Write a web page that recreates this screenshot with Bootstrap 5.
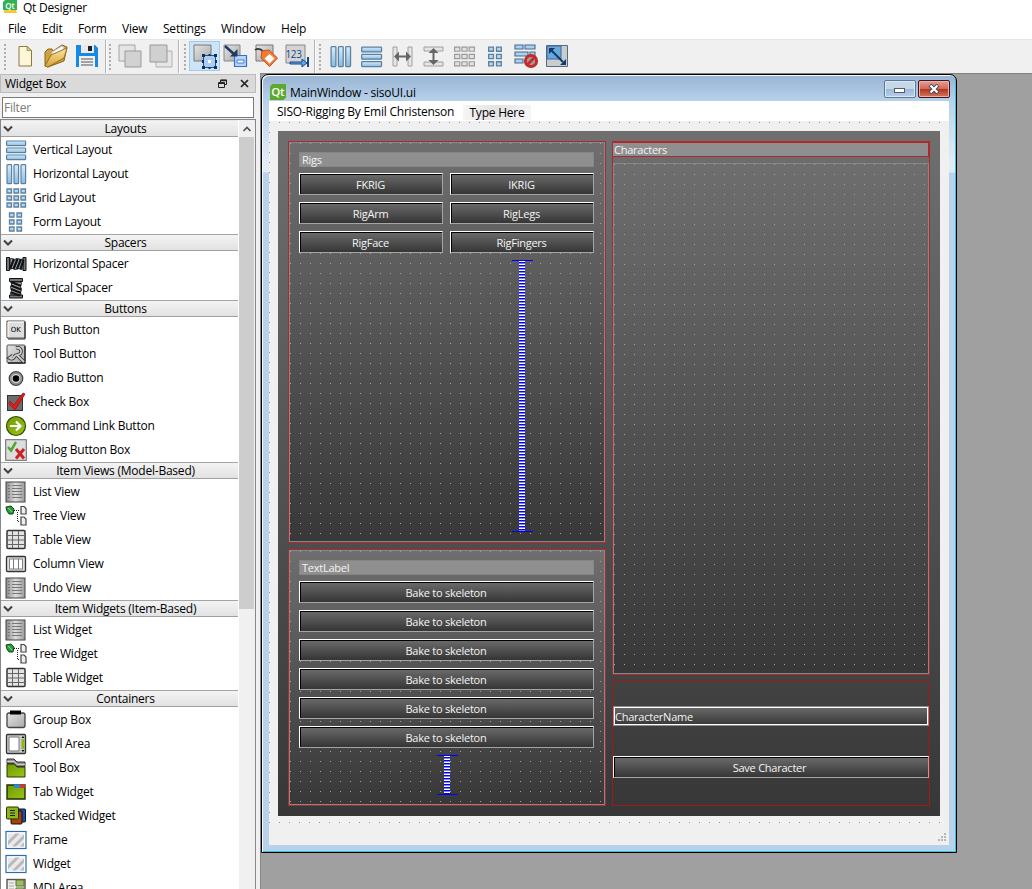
<!DOCTYPE html>
<html lang="en">
<head>
<meta charset="utf-8">
<title>Qt Designer</title>
<link href="https://cdn.jsdelivr.net/npm/bootstrap@5.3.0/dist/css/bootstrap.min.css" rel="stylesheet">
<style>
html,body{height:100%}
body{font:12px/16px "Open Sans","Noto Sans",sans-serif;letter-spacing:-.22px;color:#000;background:#fff;width:1032px;height:889px;overflow:hidden;white-space:nowrap}
svg{display:block;flex:none}
.titlebar{height:17px;padding-left:3px}
.titlebar span{margin-left:5px;line-height:15px}
.menus{height:22px;padding-left:8px}
.menus span{line-height:24px}
.tools{height:34px;background:#f0f0f0;border-top:1px solid #e6e6e6}
.tbar{height:33px;border-right:1px solid #b5b5b5;box-shadow:1px 0 #fcfcfc}
.grip{width:2px;height:26px;background:repeating-linear-gradient(#adadad 0 2px,transparent 2px 4px)}
.tool{width:31px;height:32px;padding-right:1px;display:flex;align-items:center;justify-content:center}
.tool.on{background:#cce4f7;border:1px solid #9fcbee;height:30px;width:31px;padding:0;margin-top:1px}
.workspace{height:816px;background:#f0f0f0}
.dock{width:256px;height:816px}
.dockhead{height:19px;margin-top:1px;background:#dadada;border:1px solid #bcbcbc;padding:0 6px 0 4px}
.filter{height:21px;width:252px;margin:4px 0 1px 2px;background:#fff;border:1px solid #7a7a7a;padding-left:1px;color:#7b7b7b;line-height:20px}
.tree{width:256px;height:770px;border:1px solid #828790;border-bottom:0;background:#fff;overflow:hidden}
.cat{width:237px;height:17px;margin-bottom:1px;background:linear-gradient(#f3f3f3,#e2e2e2);border-top:1px solid #a5a5a5;border-bottom:1px solid #a0a0a0;line-height:16px;padding:0 0 0 2px}
.cat:first-child{border-top-color:#e8e8e8}
.entry{height:24px;padding-left:4px;line-height:16px}
.entry svg{width:22px;height:22px;margin-right:6px;margin-top:-1px}
.vbar{width:16px;background:#f0f0f0}
.vbar .up{height:17px}
.vbar .thumb{height:472px;width:15px;background:#cdcdcd}
.mdi{margin-left:4px;width:772px;background:#a0a0a0;border-left:1px solid #828790;border-top:1px solid #828282}
.subwin{width:696px;height:779px;border:1px solid #000;border-radius:7px 7px 0 0;background:linear-gradient(#99b4d1 0,#a9c4e0 14px,#b9d1ea 26px,#e2ebf6 85px,#e2ebf6 97px,#b9d1ea 98px);box-shadow:inset 1px 1px #f4fafe,inset -1px -1px #35c4de;padding:0 7px 7px 7px}
.subtitle{height:26px;padding-top:5px}
.wbtn{width:32px;height:18px;border-radius:2px;border:1px solid #5d7797;background:linear-gradient(#c6d7ea 48%,#9db9d7 52%,#b8d0ea);box-shadow:inset 0 0 0 1px #dbe8f5;display:flex;align-items:center;justify-content:center}
.wbtn.close-it{border-color:#43141f;background:linear-gradient(#e0a095,#d5695a 48%,#b73321 52%,#d07a5c);box-shadow:inset 0 0 0 1px #e9b3a6}
.submenu{height:20px;background:#fff;padding-left:8px;line-height:22px}
.typehere{width:68px;background:linear-gradient(90deg,#f5f5f5,#e3e3e3 50%,#f5f5f5);height:15px;line-height:15px;margin:4px 0 0 8px;text-align:center}
.canvas{height:724px;padding:10px 9px 0 9px;background:url("data:image/svg+xml,%3Csvg xmlns='http://www.w3.org/2000/svg' width='10' height='10'%3E%3Crect width='1' height='1' fill='%23909090'/%3E%3C/svg%3E") 0 1px/10px 10px,#f0f0f0}
.form-area{height:692px}
.mainframe{width:662px;height:685px;background:linear-gradient(#6f6f6f,#373737);padding:10px;font-size:11px;letter-spacing:-.24px;color:#f4f4f4;line-height:14px}
.redbox{border:1px solid #b0282a}
.inner{border:1px solid #85888c;height:100%}
.grad{background:url("data:image/svg+xml,%3Csvg xmlns='http://www.w3.org/2000/svg' width='10' height='10'%3E%3Crect width='1' height='1' fill='%23a4a4a4'/%3E%3C/svg%3E") 0 0/10px 10px,linear-gradient(#6e6e6e,#383838)}
.cap{height:15px;background:#8f8f8f;border:1px solid #868686;padding-left:2px;line-height:14px}
.pbtn{height:22px;border:1px solid #fff;border-right-color:#a5a5a5;border-bottom-color:#a5a5a5;background:linear-gradient(#6c6c6c,#353535);box-shadow:inset 1px 1px #000;text-align:center;line-height:21px;padding-right:1px}
.half{width:144px}
.coil{width:21px;border-top:1px solid #00f;border-bottom:1px solid #00f}
.coil div{width:6px;height:100%;margin-left:7px;background:repeating-linear-gradient(#fff 0 1px,#00f 1px 2px,#8080ff 2px 3px)}
.lite{border:1px solid #8c8c8c;height:20px;width:316px}
.lite div{border:1px solid #fff;height:18px;background:linear-gradient(#676767,#3a3a3a);line-height:18px}
.charcap{height:15px;background:#8f8f8f;line-height:13px;border-left:0;padding-left:1px}
.statusrow{height:21px;background:#f0f0f0;margin:0 -9px}
</style>
</head>
<body>
<svg width="0" height="0" class="position-absolute">
<defs>
<linearGradient id="bl" x2="0" y2="1"><stop stop-color="#d4efff"/><stop offset="1" stop-color="#86bbe2"/></linearGradient>
<linearGradient id="gy" x2="1" y2="1"><stop stop-color="#e4e4e4"/><stop offset="1" stop-color="#a9a9a9"/></linearGradient>
<linearGradient id="dk" x2="1"><stop stop-color="#8a8a8a"/><stop offset=".5" stop-color="#ddd"/><stop offset="1" stop-color="#999"/></linearGradient>
<linearGradient id="gn" x2="1" y2="1"><stop stop-color="#6d9a00"/><stop offset="1" stop-color="#9cc41c"/></linearGradient>
<linearGradient id="fo" x2="0" y2="1"><stop stop-color="#fbe6a4"/><stop offset="1" stop-color="#d9a233"/></linearGradient>
</defs>
<symbol id="chev" viewBox="0 0 10 8"><path d="M1 1.500l4 4 4-4" fill="none" stroke="#404040" stroke-width="2"/></symbol>
<symbol id="vl" viewBox="0 0 22 22"><g fill="url(#bl)" stroke="#5f7f9f" stroke-width="1.2"><rect x="1.6" y="2" width="19" height="4.6" rx=".7"/><rect x="1.6" y="9" width="19" height="4.6" rx=".7"/><rect x="1.6" y="16" width="19" height="4.6" rx=".7"/></g></symbol>
<symbol id="hl" viewBox="0 0 22 22"><g fill="url(#bl)" stroke="#5f7f9f" stroke-width="1.2"><rect x="2" y="1.6" width="4.6" height="19" rx=".7"/><rect x="9" y="1.6" width="4.6" height="19" rx=".7"/><rect x="16" y="1.6" width="4.6" height="19" rx=".7"/></g></symbol>
<symbol id="gl" viewBox="0 0 22 22"><path fill="#b4dbf5" stroke="#5f7f9f" stroke-width="1.3" d="M2 2h4.500v4H2zM9 2h4.500v4H9zM16 2h4.500v4H16zM2 9h4.500v4H2zM9 9h4.500v4H9zM16 9h4.500v4H16zM2 16h4.500v4H2zM9 16h4.500v4H9zM16 16h4.500v4H16z"/></symbol>
<symbol id="gg" viewBox="0 0 22 22"><path fill="#e2e2e2" stroke="#9a9a9a" stroke-width="1.1" d="M1.500 2h5v4h-5zM8.500 2h5v4h-5zM15.500 2h5v4h-5zM1.500 9h5v4h-5zM8.500 9h5v4h-5zM15.500 9h5v4h-5zM1.500 16h5v4h-5zM8.500 16h5v4h-5zM15.500 16h5v4h-5z"/></symbol>
<symbol id="fl" viewBox="0 0 22 22"><path fill="#b4dbf5" stroke="#5f7f9f" stroke-width="1.3" d="M4.500 2H9v4H4.500zM12 2h4.500v4H12zM4.500 9H9v4H4.500zM12 9h4.500v4H12zM4.500 16H9v4H4.500zM12 16h4.500v4H12z"/></symbol>
<symbol id="hs" viewBox="0 0 22 22"><path d="M1.500 4.500h3v13h-3zM18 4.500h3v13h-3z" fill="#777" stroke="#111"/><path d="M5 6q2-1 3 0t3 0 3 0 4 0v10q-2 1-3 0t-3 0-3 0-4 0z" fill="#8fa3af" stroke="#222"/><path d="M5 16l4-10M8.500 16l4-10M12 16l4-10M15.500 16l3-9" stroke="#111" stroke-width="2.200"/></symbol>
<symbol id="vs" viewBox="0 0 22 22"><use href="#hs" width="22" height="22" transform="rotate(90 11 11)"/></symbol>
<symbol id="pb" viewBox="0 0 22 22"><rect x="2" y="2" width="18" height="17" rx="1" fill="#ddd" stroke="#555" stroke-width="1.200"/><path d="M20 3v17H3" fill="none" stroke="#222"/><path d="M3 18V3h16" fill="none" stroke="#fff"/><text x="10.800" y="12.500" font-size="7" text-anchor="middle" letter-spacing="0" font-family="DejaVu Sans">OK</text></symbol>
<symbol id="tb" viewBox="0 0 22 22"><rect x="2" y="2" width="18" height="18" rx="1" fill="url(#gy)" stroke="#555"/><path d="M20 3v17H3" fill="none" stroke="#222" stroke-width="1.300"/><path d="M11 5q4-1 5 2.500T12 12q-1.500 0-2.500 1.500-2 3.500-5 1.500l3.500-2.500M12 12l7 7" fill="none" stroke="#333" stroke-width="3.600"/><path d="M11 5q4-1 5 2.500T12 12q-1.500 0-2.500 1.500-2 3.500-5 1.500l3.500-2.500M12 12l7 7" fill="none" stroke="#ccc" stroke-width="1.800"/></symbol>
<symbol id="rb" viewBox="0 0 22 22"><circle cx="11" cy="11.500" r="6.800" fill="#999" stroke="#444" stroke-width="1.200"/><circle cx="11" cy="11.500" r="5" fill="#dcdcdc" stroke="#888"/><circle cx="11" cy="11.500" r="3.300" fill="#000"/></symbol>
<symbol id="cb" viewBox="0 0 22 22"><rect x="2.500" y="4.500" width="15" height="15" fill="#6c6c6c" stroke="#333"/><path d="M5 10l4 4 9-12 2 1L10 19 4 13z" fill="#d81e1e" stroke="#a01010" stroke-width=".8"/></symbol>
<symbol id="cl" viewBox="0 0 22 22"><circle cx="11" cy="11" r="9.500" fill="url(#gn)" stroke="#374c06" stroke-width="1.200"/><path d="M5 11h10M11 6.500l4.500 4.500-4.500 4.500" fill="none" stroke="#fff" stroke-width="2.200"/></symbol>
<symbol id="db" viewBox="0 0 22 22"><rect x=".7" y=".7" width="20.600" height="20.600" fill="#ddd" stroke="#666"/><path d="M3 8l3 3.500L11 3" fill="none" stroke="#4caa31" stroke-width="2.500"/><path d="M11 10l8 9.500M19 10l-8 9.500" stroke="#c22" stroke-width="3"/></symbol>
<symbol id="lv" viewBox="0 0 22 22"><rect x="1" y="1" width="19" height="20" fill="url(#dk)" stroke="#444"/><path d="M3 4.500h2M3 7.500h2M3 10.500h2M3 13.500h2M3 16.500h2M7 4.500h10M7 7.500h10M7 10.500h10M7 13.500h10M7 16.500h10" stroke="#777" stroke-width="1"/></symbol>
<symbol id="tv" viewBox="0 0 22 22"><path d="M1 2l5-1 3 3-1 5H4Q1 6 1 2z" fill="#2d9a3e" stroke="#114a18"/><path d="M3 3l4 4" stroke="#90e090"/><path d="M9 5.500h6M12.500 7v9.500H15" fill="none" stroke="#222" stroke-dasharray="1 1"/><path d="M16 1.500h3l2 2V9h-5zM16 12h3l2 2v6h-5z" fill="#eee" stroke="#444" stroke-width="1.200"/></symbol>
<symbol id="ta" viewBox="0 0 22 22"><rect x="2" y="1.500" width="18" height="18" rx="1" fill="#e4e4e4" stroke="#333" stroke-width="1.500"/><path d="M3 6.500h17M3 11h17M3 15.500h17M7.500 2v17M13.500 2v17" stroke="#666"/></symbol>
<symbol id="cv" viewBox="0 0 22 22"><rect x="1.500" y="3.500" width="19" height="15" rx="1" fill="#ddd" stroke="#333" stroke-width="1.300"/><path d="M4.500 6h4v10h-4zM8.500 6h5v10h-5zM13.500 6h4v10h-4z" fill="#fff" stroke="#777" stroke-width=".9"/></symbol>
<symbol id="gb" viewBox="0 0 22 22"><rect x="2" y="4" width="18" height="14.500" rx="2" fill="url(#gy)" stroke="#444" stroke-width="1.300"/><path d="M5 1.500h11v4H5z" fill="#000"/></symbol>
<symbol id="sa" viewBox="0 0 22 22"><rect x="1.500" y="1.500" width="19" height="19" rx="1" fill="#ccc" stroke="#333" stroke-width="1.300"/><path d="M4 4h10v14H4z" fill="#fff" stroke="#777"/><path d="M16.500 6h3v10h-3z" fill="#8fb51d"/><path d="M16.500 5L18 3l1.500 2zM16.500 17l1.500 2 1.500-2z"/></symbol>
<symbol id="to" viewBox="0 0 22 22"><path d="M2 7h7l3 3h8v10H2z" fill="url(#gn)" stroke="#263a00"/><path d="M2 2h7l3 3h8v4.500h-8L9 6.500H2z" fill="#888" stroke="#333"/><path d="M2 4.300h7l3 3h8" fill="none" stroke="#ddd"/></symbol>
<symbol id="tw" viewBox="0 0 22 22"><path d="M2 5V4h18v14H2z" fill="url(#gn)" stroke="#1f2e00" stroke-width="1.400"/><path d="M9 3.500h6V7H9z" fill="#258bd8"/><path d="M15 3.500h5V7h-5z" fill="#d93425"/></symbol>
<symbol id="sw" viewBox="0 0 22 22"><rect x="11" y="4" width="9.500" height="13" rx="1" fill="#1653ae" stroke="#111"/><rect x="6" y="6" width="11" height="13" rx="1" fill="#a8410d" stroke="#111"/><rect x="1.500" y="2" width="12" height="12" rx="1" fill="#8eb61b" stroke="#263300"/><path d="M5 5.500h5M5 8h5M5 10.500h5" stroke="#222"/></symbol>
<symbol id="fr" viewBox="0 0 22 22"><rect x="1" y="2.500" width="20" height="17" fill="#fff" stroke="#2c6db4" stroke-width="1.200"/><rect x="3" y="4.500" width="16" height="13" fill="#e9e9e9"/><path d="M3 12l7.500-7.500h4L3 16zM7 17.500l12-12v4l-8 8zM15 17.500l4-4v4z" fill="#b9b9b9"/></symbol>
<symbol id="md" viewBox="0 0 22 22"><rect x="2" y="2.500" width="18" height="17" fill="#eee" stroke="#555" stroke-width="1.400"/><path d="M11 3h8v6h-8z" fill="#9cbf60" stroke="#587530"/><path d="M4 6h5M4 9h5M4 12h5" stroke="#aaa"/><path d="M11 11h8v7h-8z" fill="#bcd2a0" stroke="#587530"/></symbol>
<symbol id="qt" viewBox="0 0 16 16"><path d="M2.500 0H16v13.500L13.500 16H0V2.500z" fill="#5caa2d"/><text x="7.800" y="12" font-size="11.500" font-weight="600" fill="#fff" text-anchor="middle" letter-spacing="-.3">Qt</text></symbol>
</svg>

<header class="titlebar d-flex">
<svg width="15" height="15" viewBox="0 0 15 15"><path d="M2 0h12v10H0V2z" fill="#2fb355"/><path d="M1 10h12l1 3H1z" fill="#f2c833"/><text x="7" y="8.700" font-size="8" font-weight="600" fill="#fff" text-anchor="middle" letter-spacing="0">Qt</text></svg>
<span>Qt Designer</span></header>
<nav class="menus d-flex"><span style="width:34px">File</span><span style="width:36px">Edit</span><span style="width:44px">Form</span><span style="width:41px">View</span><span style="width:58px">Settings</span><span style="width:60px">Window</span><span>Help</span></nav>

<div class="tools d-flex">
<div class="tbar d-flex" style="width:106px;padding:0 0 0 4px"><i class="grip mt-1"></i>
<div class="d-flex ms-1">
<div class="tool"><svg width="16" height="24" viewBox="0 0 16 24"><path d="M2 2.500h8l4.500 4V22H2z" fill="#fdf6d8" stroke="#8a7a3c"/><path d="M10 2.500v4h4.500z" fill="#e4cf86" stroke="#8a7a3c" stroke-width=".7"/></svg></div>
<div class="tool"><svg width="26" height="26" viewBox="0 0 26 26"><path d="M2 23V9l3-3h4l1 2 9-6 5 2-3 14-16 6z" fill="#d0a13e" stroke="#8a661d"/><path d="M9 9l10-6 2 1-1 8-12 5z" fill="#fff" stroke="#bbb"/><path d="M2 23l6-11 16-7L21 15 5 24z" fill="url(#fo)" stroke="#94701f"/></svg></div>
<div class="tool"><svg width="24" height="24" viewBox="0 0 24 24"><path d="M1 1h19l3 3v19H1z" fill="#1788e6"/><path d="M6 1h13v8H6z" fill="#e9e9e9"/><path d="M13 2h4v5h-4z" fill="#222"/><path d="M4 12h16v11H4z" fill="#f1f1f1"/><path d="M6 15h12M6 18h12M6 21h12" stroke="#888" stroke-width="1.500"/></svg></div>
</div></div>
<div class="tbar d-flex" style="width:73px;padding-left:3px"><i class="grip mt-1"></i><div class="d-flex ms-1">
<div class="tool"><svg width="26" height="26" viewBox="0 0 26 26"><path d="M2 2h16v16H2z" fill="#e4e4e4" stroke="#a4a4a4"/><path d="M8 8h16v16H8z" fill="#d2d2d2" stroke="#999"/></svg></div>
<div class="tool"><svg width="26" height="26" viewBox="0 0 26 26"><path d="M8 8h16v16H8z" fill="#e6e6e6" stroke="#b0b0b0"/><path d="M2 2h17v17H2z" fill="#d0d0d0" stroke="#999"/></svg></div>
</div></div>
<div class="tbar d-flex" style="width:136px;padding-left:5px"><i class="grip mt-1"></i><div class="d-flex" style="margin-left:3px">
<div class="tool on"><svg width="26" height="26" viewBox="0 0 26 26"><path d="M2 2h17v16H2z" fill="url(#gy)" stroke="#777"/><path d="M11.500 12.500h12v12h-12z" fill="#a9cdf5" stroke="#264f86"/><path d="M10 11h3v3h-3zM16.500 11h2v2h-2zM22 11h3v3h-3zM10 17h2v3h-2zM23 17h2v3h-2zM10 23h3v3h-3zM16.500 24h2v2h-2zM22 23h3v3h-3z" fill="#12305c"/><path d="M16 17h3v3h-3z" fill="#fff"/></svg></div>
<div class="tool"><svg width="26" height="26" viewBox="0 0 26 26"><path d="M2 2h16v16H2z" fill="url(#gy)" stroke="#888"/><path d="M12.500 12.500h12v11h-12z" fill="#b5d4fb" stroke="#3772c5" stroke-width="1.200"/><path d="M15 17h7v3h-7z" fill="#fff" stroke="#3f7ed1"/><path d="M3 3l10 9" stroke="#223b60" stroke-width="2.500"/><path d="M15.500 6v7.500H8z" fill="#223b60"/></svg></div>
<div class="tool"><svg width="26" height="26" viewBox="0 0 26 26"><path d="M3 2h17v16H3z" fill="url(#gy)" stroke="#777"/><path d="M2 7q4-3 9 2" fill="none" stroke="#333" stroke-width="1.500"/><path d="M9 8l7-1 8.500 8-8 8.500L8 15z" fill="#f47b35" stroke="#c4500f"/><path d="M16.500 11l5 4.500-5 5-5-5z" fill="#fff"/></svg></div>
<div class="tool"><svg width="26" height="26" viewBox="0 0 26 26"><path d="M2 2h19v18H2z" fill="#d4d4d4" stroke="#888"/><text x="9.500" y="15" font-size="10" text-anchor="middle" fill="#174587" letter-spacing="-.4">123</text><path d="M6 19h12v-3l5 4-5 4v-3H6z" fill="#65a6e8" stroke="#174587"/><path d="M24 14v10" stroke="#174587" stroke-width="2"/></svg></div>
</div></div>
<div class="d-flex" style="padding-left:4px"><i class="grip mt-1"></i><div class="d-flex" style="margin-left:4px">
<div class="tool"><svg width="23" height="23"><use href="#hl"/></svg></div>
<div class="tool"><svg width="23" height="23"><use href="#vl"/></svg></div>
<div class="tool"><svg width="23" height="23" viewBox="0 0 23 23"><path d="M2 2h4v19H2zM17 2h4v19h-4z" fill="#e5e5e5" stroke="#a0a0a0"/><path d="M3 11.500l5-5v4h7v-4l5 5-5 5v-4H8v4z" fill="#666"/></svg></div>
<div class="tool"><svg width="23" height="23" viewBox="0 0 23 23"><path d="M2 2h19v4H2zM2 17h19v4H2z" fill="#e5e5e5" stroke="#a0a0a0"/><path d="M11.500 3l5 5h-4v7h4l-5 5-5-5h4V8h-4z" fill="#666"/></svg></div>
<div class="tool"><svg width="23" height="23"><use href="#gg"/></svg></div>
<div class="tool"><svg width="23" height="23"><use href="#fl"/></svg></div>
<div class="tool"><svg width="26" height="26" viewBox="0 0 26 26"><path d="M2 2h8v4H2zM12 2h10v4H12zM2 9h13v4H2zM17 9h5v4h-5zM2 16h8v4H2z" fill="#a8d3f0" stroke="#49698b" stroke-width="1.100"/><circle cx="18" cy="18" r="5.600" fill="#a59a9a" stroke="#c22b2b" stroke-width="3"/><path d="M14 22l8-8" stroke="#c22b2b" stroke-width="2.500"/></svg></div>
<div class="tool"><svg width="24" height="24" viewBox="0 0 24 24"><path d="M1.500 1.500h21v21h-21z" fill="#c9cdd1" stroke="#5b6a7a"/><path d="M2 2h14v13H2z" fill="#69a8dc" stroke="#40699a"/><path d="M6 6l12 12" stroke="#123a63" stroke-width="2"/><path d="M4 4h6l-6 6zM21 21v-6l-6 6z" fill="#123a63"/></svg></div>
</div></div>
</div>

<main class="workspace d-flex">
<aside class="dock">
<div class="dockhead d-flex align-items-center justify-content-between"><span style="line-height:18px;padding-top:1px">Widget Box</span>
<span class="d-flex gap-3 align-items-center"><svg width="9" height="9" viewBox="0 0 9 9" style="margin-right:-3px"><path d="M2.500 3V1h6v4.500H7" fill="none" stroke="#222"/><path d="M2.500 1.500h6" stroke="#222" stroke-width="1.500"/><path d="M.5 3.500h6v5h-6zM.5 4.500h6" fill="none" stroke="#222"/></svg><svg width="9" height="9" viewBox="0 0 9 9"><path d="M1 1l7 7M8 1L1 8" stroke="#222" stroke-width="1.700"/></svg></span></div>
<div class="filter">Filter</div>
<div class="tree d-flex">
<div style="width:238px">
<div class="cat d-flex"><svg width="10" height="8" class="mt-1"><use href="#chev"/></svg><span class="flex-fill text-center">Layouts</span></div>
<div class="entry d-flex align-items-center"><svg><use href="#vl"/></svg>Vertical Layout</div>
<div class="entry d-flex align-items-center"><svg><use href="#hl"/></svg>Horizontal Layout</div>
<div class="entry d-flex align-items-center"><svg><use href="#gl"/></svg>Grid Layout</div>
<div class="entry d-flex align-items-center"><svg><use href="#fl"/></svg>Form Layout</div>
<div class="cat d-flex"><svg width="10" height="8" class="mt-1"><use href="#chev"/></svg><span class="flex-fill text-center">Spacers</span></div>
<div class="entry d-flex align-items-center"><svg><use href="#hs"/></svg>Horizontal Spacer</div>
<div class="entry d-flex align-items-center"><svg><use href="#vs"/></svg>Vertical Spacer</div>
<div class="cat d-flex"><svg width="10" height="8" class="mt-1"><use href="#chev"/></svg><span class="flex-fill text-center">Buttons</span></div>
<div class="entry d-flex align-items-center"><svg><use href="#pb"/></svg>Push Button</div>
<div class="entry d-flex align-items-center"><svg><use href="#tb"/></svg>Tool Button</div>
<div class="entry d-flex align-items-center"><svg><use href="#rb"/></svg>Radio Button</div>
<div class="entry d-flex align-items-center"><svg><use href="#cb"/></svg>Check Box</div>
<div class="entry d-flex align-items-center"><svg><use href="#cl"/></svg>Command Link Button</div>
<div class="entry d-flex align-items-center"><svg><use href="#db"/></svg>Dialog Button Box</div>
<div class="cat d-flex"><svg width="10" height="8" class="mt-1"><use href="#chev"/></svg><span class="flex-fill text-center">Item Views (Model-Based)</span></div>
<div class="entry d-flex align-items-center"><svg><use href="#lv"/></svg>List View</div>
<div class="entry d-flex align-items-center"><svg><use href="#tv"/></svg>Tree View</div>
<div class="entry d-flex align-items-center"><svg><use href="#ta"/></svg>Table View</div>
<div class="entry d-flex align-items-center"><svg><use href="#cv"/></svg>Column View</div>
<div class="entry d-flex align-items-center"><svg><use href="#lv"/></svg>Undo View</div>
<div class="cat d-flex"><svg width="10" height="8" class="mt-1"><use href="#chev"/></svg><span class="flex-fill text-center">Item Widgets (Item-Based)</span></div>
<div class="entry d-flex align-items-center"><svg><use href="#lv"/></svg>List Widget</div>
<div class="entry d-flex align-items-center"><svg><use href="#tv"/></svg>Tree Widget</div>
<div class="entry d-flex align-items-center"><svg><use href="#ta"/></svg>Table Widget</div>
<div class="cat d-flex"><svg width="10" height="8" class="mt-1"><use href="#chev"/></svg><span class="flex-fill text-center">Containers</span></div>
<div class="entry d-flex align-items-center"><svg><use href="#gb"/></svg>Group Box</div>
<div class="entry d-flex align-items-center"><svg><use href="#sa"/></svg>Scroll Area</div>
<div class="entry d-flex align-items-center"><svg><use href="#to"/></svg>Tool Box</div>
<div class="entry d-flex align-items-center"><svg><use href="#tw"/></svg>Tab Widget</div>
<div class="entry d-flex align-items-center"><svg><use href="#sw"/></svg>Stacked Widget</div>
<div class="entry d-flex align-items-center"><svg><use href="#fr"/></svg>Frame</div>
<div class="entry d-flex align-items-center"><svg><use href="#fr"/></svg>Widget</div>
<div class="entry d-flex align-items-center"><svg><use href="#md"/></svg>MDI Area</div>
</div>
<div class="vbar"><div class="up d-flex align-items-center justify-content-center"><svg width="10" height="8" viewBox="0 0 10 8"><path d="M1.500 6L5 2.500 8.500 6" fill="none" stroke="#505050" stroke-width="1.700"/></svg></div><div class="thumb"></div></div>
</div>
</aside>

<section class="mdi">
<div class="subwin">
<div class="subtitle d-flex"><svg width="16" height="16" style="margin:4px 4px 0 1px"><use href="#qt"/></svg><span style="line-height:26px">MainWindow - sisoUI.ui</span>
<div class="wbtn ms-auto"><svg width="12" height="6" viewBox="0 0 12 6" class="mt-1"><rect x=".5" y=".5" width="10" height="4" fill="#fff" stroke="#555b66"/></svg></div>
<div class="wbtn close-it" style="margin-left:2px;margin-right:-1px"><svg width="12" height="10" viewBox="0 0 12 10"><path d="M2 1l8 8M10 1L2 9" stroke="#444a58" stroke-width="4"/><path d="M2.500 1.500l7 7M9.500 1.500l-7 7" stroke="#fff" stroke-width="2.200"/></svg></div></div>
<div class="submenu d-flex"><span style="width:178px">SISO-Rigging By Emil Christenson</span><div class="typehere">Type Here</div></div>
<div class="canvas">
<div class="form-area">
<div class="mainframe d-flex justify-content-between">
<div class="d-flex flex-column justify-content-between" style="width:318px;height:665px">
<div class="redbox" style="height:402px"><div class="inner grad d-flex flex-column" style="padding:9px 10px 0 9px">
<div class="cap">Rigs</div>
<div class="d-flex flex-column" style="gap:7px;margin-top:6px">
<div class="d-flex justify-content-between"><div class="pbtn half">FKRIG</div><div class="pbtn half">IKRIG</div></div>
<div class="d-flex justify-content-between"><div class="pbtn half">RigArm</div><div class="pbtn half">RigLegs</div></div>
<div class="d-flex justify-content-between"><div class="pbtn half">RigFace</div><div class="pbtn half">RigFingers</div></div>
</div>
<div class="coil" style="height:272px;margin:7px 0 0 213px"><div></div></div>
</div></div>
<div class="redbox" style="height:257px"><div class="inner grad d-flex flex-column" style="padding:9px 10px 0 9px">
<div class="cap">TextLabel</div>
<div class="d-flex flex-column" style="gap:7px;margin-top:6px">
<div class="pbtn">Bake to skeleton</div><div class="pbtn">Bake to skeleton</div><div class="pbtn">Bake to skeleton</div><div class="pbtn">Bake to skeleton</div><div class="pbtn">Bake to skeleton</div><div class="pbtn">Bake to skeleton</div>
</div>
<div class="coil" style="height:40px;margin:7px 0 0 138px"><div></div></div>
</div></div>
</div>
<div class="d-flex flex-column justify-content-between" style="width:318px;height:665px">
<div class="redbox" style="height:534px">
<div class="redbox charcap">Characters</div>
<div class="inner grad" style="height:511px;margin-top:6px"></div>
</div>
<div class="redbox" style="height:125px;border-color:#a01a1c;padding-top:24px">
<div class="lite"><div>CharacterName</div></div>
<div class="pbtn" style="margin-top:30px;padding-right:3px">Save Character</div>
</div>
</div>
</div>
</div>
<div class="statusrow d-flex justify-content-end align-items-end"><svg width="12" height="12" viewBox="0 0 12 12"><path d="M7 1h2v2H7zM4 4h2v2H4zM7 4h2v2H7zM1 7h2v2H1zM4 7h2v2H4zM7 7h2v2H7z" fill="#b8b8b8"/></svg></div>
</div>
</div>
</section>
</main>
<script src="https://cdn.jsdelivr.net/npm/bootstrap@5.3.0/dist/js/bootstrap.bundle.min.js"></script>
</body>
</html>
